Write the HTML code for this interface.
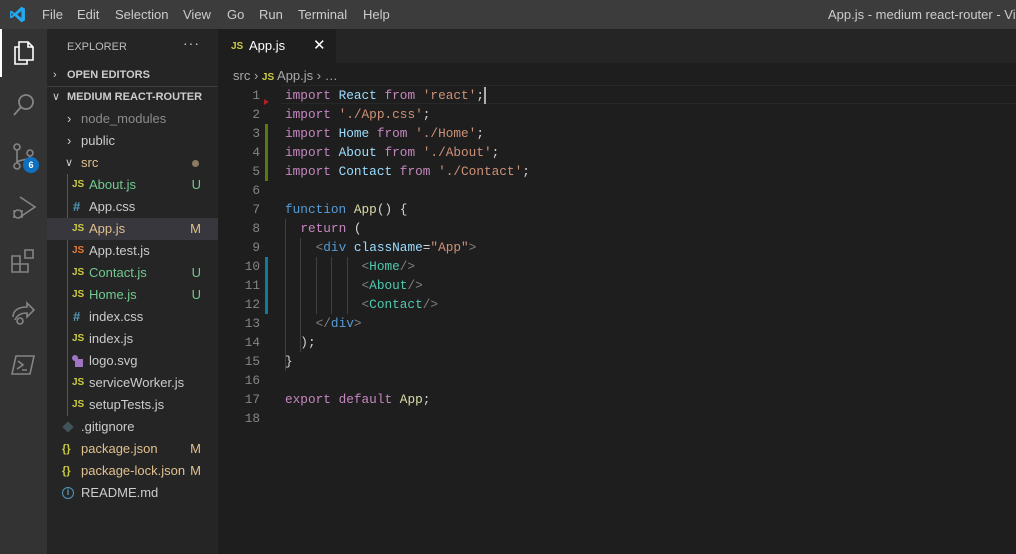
<!DOCTYPE html>
<html><head><style>
*{margin:0;padding:0;box-sizing:border-box}
body{width:1016px;height:554px;overflow:hidden;background:#1e1e1e;font-family:"Liberation Sans",sans-serif;font-size:13px;color:#ccc;position:relative}
.a{position:absolute}
#title{left:0;top:0;width:1016px;height:29px;background:#3c3c3c;overflow:hidden}
#title span{position:absolute;top:7px;font-size:13px;color:#ccc;white-space:nowrap}
#act{left:0;top:29px;width:47px;height:525px;background:#333}
#side{left:47px;top:29px;width:171px;height:525px;background:#252526}
#tabs{left:218px;top:29px;width:798px;height:34px;background:#252526}
.row{position:absolute;left:0;width:171px;height:22px;line-height:22px;font-size:13px;white-space:nowrap}
.row .i{position:absolute;font-size:10px;font-weight:bold}
.row .n{position:absolute}
.row .s{position:absolute;right:17px;font-size:13px}
.js{color:#cbcb41}
.code{position:absolute;left:285px;font-family:"Liberation Mono",monospace;font-size:12.75px;white-space:pre;line-height:19px;height:19px;color:#d4d4d4}
.ln{position:absolute;left:230px;width:30px;text-align:right;font-family:"Liberation Mono",monospace;font-size:12.75px;line-height:19px;color:#858585}
.k{color:#c586c0}.v{color:#9cdcfe}.s2{color:#ce9178}.b{color:#569cd6}.f{color:#dcdcaa}.t{color:#4ec9b0}.g{color:#808080}
.guide{position:absolute;width:1px;background:#404040}
</style></head><body>
<div id="title" class="a">
<svg class="a" style="left:9px;top:6px" width="17" height="17" viewBox="0 0 24 24"><path d="M17.5 1L8 10 3.5 6.5 1.5 7.5v9l2 1L8 14l9.5 9 5-2.5V3.5z M17.5 7v10l-6-5z M3.5 9.5 6 12l-2.5 2.5z" fill="#23a9f2" fill-rule="evenodd"/></svg>
<span style="left:42px">File</span><span style="left:77px">Edit</span><span style="left:115px">Selection</span><span style="left:183px">View</span><span style="left:227px">Go</span><span style="left:259px">Run</span><span style="left:298px">Terminal</span><span style="left:363px">Help</span>
<span style="left:828px">App.js - medium react-router - Visual Studio Code</span>
</div>
<div id="act" class="a">
<div class="a" style="left:0;top:0;width:2px;height:48px;background:#fff"></div>
<svg class="a" style="left:11px;top:11px" width="26" height="26" viewBox="0 0 26 26" fill="none" stroke="#fff" stroke-width="1.6"><path d="M8 2h9l5 5v13H8z M17 2v5h5"/><path d="M8 7H4v17h12v-4"/></svg>
<svg class="a" style="left:11px;top:63px" width="26" height="26" viewBox="0 0 26 26" fill="none" stroke="#858585" stroke-width="1.8"><circle cx="15" cy="10" r="7"/><path d="M10 15 3 23"/></svg>
<svg class="a" style="left:11px;top:114px" width="26" height="28" viewBox="0 0 26 28" fill="none" stroke="#858585" stroke-width="1.6"><circle cx="6" cy="4" r="3"/><circle cx="6" cy="23" r="3"/><circle cx="19" cy="10" r="3"/><path d="M6 7v13 M19 13c0 5-13 3-13 7"/></svg>
<div class="a" style="left:23px;top:128px;width:16px;height:16px;border-radius:8px;background:#0e70c0;color:#fff;font-size:9px;font-weight:bold;text-align:center;line-height:16px">6</div>
<svg class="a" style="left:10px;top:165px" width="28" height="28" viewBox="0 0 28 28" fill="none" stroke="#858585" stroke-width="1.6"><path d="M10 3l15 10-15 10"/><circle cx="8" cy="20" r="4"/><path d="M3 17h2M3 23h2M11 17h2M11 23h2"/></svg>
<svg class="a" style="left:10px;top:219px" width="26" height="26" viewBox="0 0 26 26" fill="none" stroke="#858585" stroke-width="1.6"><path d="M2 8h8v8H2zM2 16h8v8H2zM10 16h8v8h-8z M15 2h8v8h-8z"/></svg>
<svg class="a" style="left:10px;top:272px" width="28" height="26" viewBox="0 0 28 26" fill="none" stroke="#858585" stroke-width="1.6"><path d="M3 16c0-7 6-10 14-10V2l7 7-7 7v-4c-6 0-10 2-12 7"/><circle cx="10" cy="20" r="3"/></svg>
<svg class="a" style="left:11px;top:325px" width="24" height="22" viewBox="0 0 24 22" fill="none" stroke="#858585" stroke-width="1.6"><path d="M5 2h18l-4 18H1z M7 7l5 4-6 4 M11 16h5"/></svg>
</div>
<div id="side" class="a">
<div class="a" style="left:20px;top:12px;font-size:11px;color:#bbb">EXPLORER</div>
<div class="a" style="left:136px;top:6px;font-size:14px;color:#ccc;letter-spacing:1px">···</div>
<div class="row" style="top:35px"><span class="n" style="left:6px;font-size:11px">&#x203A;</span><span class="n" style="left:20px;font-size:11px;font-weight:bold">OPEN EDITORS</span></div>
<div class="a" style="left:0;top:57px;width:171px;height:1px;background:#3c3c3c"></div>
<div class="row" style="top:57px"><span class="n" style="left:5px;font-size:11px">&#x2228;</span><span class="n" style="left:20px;font-size:11px;font-weight:bold">MEDIUM REACT-ROUTER</span></div>
<div class="row" style="top:79px"><span class="n" style="left:20px">&#x203A;</span><span class="n" style="left:34px;color:#8c8c8c">node_modules</span></div>
<div class="row" style="top:101px"><span class="n" style="left:20px">&#x203A;</span><span class="n" style="left:34px">public</span></div>
<div class="row" style="top:123px"><span class="n" style="left:18px;font-size:11px">&#x2228;</span><span class="n" style="left:34px;color:#e2c08d">src</span><span class="a" style="left:145px;top:8px;width:7px;height:7px;border-radius:4px;background:#8a7b62"></span></div>
<div class="a" style="left:20px;top:145px;width:1px;height:242px;background:#585858"></div>
<div class="row" style="top:145px"><span class="i js" style="left:25px">JS</span><span class="n" style="left:42px;color:#73c991">About.js</span><span class="s" style="color:#73c991">U</span></div>
<div class="row" style="top:167px"><span class="i" style="left:26px;color:#519aba;font-size:13px">#</span><span class="n" style="left:42px">App.css</span></div>
<div class="row" style="top:189px;background:#37373d"><span class="i js" style="left:25px">JS</span><span class="n" style="left:42px;color:#e2c08d">App.js</span><span class="s" style="color:#e2c08d">M</span></div>
<div class="row" style="top:211px"><span class="i" style="left:25px;color:#e37933">JS</span><span class="n" style="left:42px">App.test.js</span></div>
<div class="row" style="top:233px"><span class="i js" style="left:25px">JS</span><span class="n" style="left:42px;color:#73c991">Contact.js</span><span class="s" style="color:#73c991">U</span></div>
<div class="row" style="top:255px"><span class="i js" style="left:25px">JS</span><span class="n" style="left:42px;color:#73c991">Home.js</span><span class="s" style="color:#73c991">U</span></div>
<div class="row" style="top:277px"><span class="i" style="left:26px;color:#519aba;font-size:13px">#</span><span class="n" style="left:42px">index.css</span></div>
<div class="row" style="top:299px"><span class="i js" style="left:25px">JS</span><span class="n" style="left:42px">index.js</span></div>
<div class="row" style="top:321px"><span class="a" style="left:25px;top:5px;width:6px;height:6px;border-radius:3px;background:#a074c4"></span><span class="a" style="left:28px;top:9px;width:8px;height:8px;background:#a074c4"></span><span class="n" style="left:42px">logo.svg</span></div>
<div class="row" style="top:343px"><span class="i js" style="left:25px">JS</span><span class="n" style="left:42px">serviceWorker.js</span></div>
<div class="row" style="top:365px"><span class="i js" style="left:25px">JS</span><span class="n" style="left:42px">setupTests.js</span></div>
<div class="row" style="top:387px"><span class="a" style="left:17px;top:7px;width:8px;height:8px;background:#41535b;transform:rotate(45deg)"></span><span class="n" style="left:34px">.gitignore</span></div>
<div class="row" style="top:409px"><span class="i js" style="left:15px;font-size:11px">{}</span><span class="n" style="left:34px;color:#e2c08d">package.json</span><span class="s" style="color:#e2c08d">M</span></div>
<div class="row" style="top:431px"><span class="i js" style="left:15px;font-size:11px">{}</span><span class="n" style="left:34px;color:#e2c08d">package-lock.json</span><span class="s" style="color:#e2c08d;right:17px">M</span></div>
<div class="row" style="top:453px"><span class="a" style="left:15px;top:5px;width:12px;height:12px;border:1.3px solid #519aba;border-radius:6px;color:#519aba;font-size:9px;line-height:9px;text-align:center;font-weight:bold">i</span><span class="n" style="left:34px">README.md</span></div>
</div>
<div id="tabs" class="a">
<div class="a" style="left:0;top:0;width:118px;height:34px;background:#1e1e1e">
<span class="a js" style="left:13px;top:12px;font-size:10px;font-weight:bold">JS</span>
<span class="a" style="left:31px;top:9px;color:#fff">App.js</span>
<span class="a" style="left:95px;top:7px;color:#fff;font-size:15px">✕</span>
</div></div>
<div class="a" style="left:233px;top:68px;font-size:13px;color:#a9a9a9;white-space:nowrap">src &#x203A; <span class="js" style="font-size:10px;font-weight:bold">JS</span> App.js &#x203A; …</div>
<div class="a" style="left:281px;top:85px;width:735px;height:19px;border-top:1px solid #282828;border-bottom:1px solid #282828"></div>
<div class="a" style="left:484px;top:87px;width:2px;height:17px;background:#aeafad"></div>
<div class="a" style="left:264px;top:99px;width:0;height:0;border-top:3px solid transparent;border-bottom:3px solid transparent;border-left:5px solid #b02020"></div>
<div class="a" style="left:265px;top:124px;width:3px;height:57px;background:#587c0c"></div>
<div class="a" style="left:265px;top:257px;width:3px;height:57px;background:#0c7d9d"></div>
<div class="guide" style="left:285px;top:219px;height:152px"></div>
<div class="guide" style="left:300px;top:238px;height:114px"></div>
<div class="guide" style="left:316px;top:257px;height:57px"></div>
<div class="guide" style="left:331px;top:257px;height:57px"></div>
<div class="guide" style="left:347px;top:257px;height:57px"></div>
<div class="ln" style="top:86px">1</div><div class="ln" style="top:105px">2</div><div class="ln" style="top:124px">3</div><div class="ln" style="top:143px">4</div><div class="ln" style="top:162px">5</div><div class="ln" style="top:181px">6</div><div class="ln" style="top:200px">7</div><div class="ln" style="top:219px">8</div><div class="ln" style="top:238px">9</div><div class="ln" style="top:257px">10</div><div class="ln" style="top:276px">11</div><div class="ln" style="top:295px">12</div><div class="ln" style="top:314px">13</div><div class="ln" style="top:333px">14</div><div class="ln" style="top:352px">15</div><div class="ln" style="top:371px">16</div><div class="ln" style="top:390px">17</div><div class="ln" style="top:409px">18</div>
<div class="code" style="top:86px"><span class="k">import</span> <span class="v">React</span> <span class="k">from</span> <span class="s2">'react'</span>;</div>
<div class="code" style="top:105px"><span class="k">import</span> <span class="s2">'./App.css'</span>;</div>
<div class="code" style="top:124px"><span class="k">import</span> <span class="v">Home</span> <span class="k">from</span> <span class="s2">'./Home'</span>;</div>
<div class="code" style="top:143px"><span class="k">import</span> <span class="v">About</span> <span class="k">from</span> <span class="s2">'./About'</span>;</div>
<div class="code" style="top:162px"><span class="k">import</span> <span class="v">Contact</span> <span class="k">from</span> <span class="s2">'./Contact'</span>;</div>
<div class="code" style="top:200px"><span class="b">function</span> <span class="f">App</span>() {</div>
<div class="code" style="top:219px">  <span class="k">return</span> (</div>
<div class="code" style="top:238px">    <span class="g">&lt;</span><span class="b">div</span> <span class="v">className</span>=<span class="s2">"App"</span><span class="g">&gt;</span></div>
<div class="code" style="top:257px">          <span class="g">&lt;</span><span class="t">Home</span><span class="g">/&gt;</span></div>
<div class="code" style="top:276px">          <span class="g">&lt;</span><span class="t">About</span><span class="g">/&gt;</span></div>
<div class="code" style="top:295px">          <span class="g">&lt;</span><span class="t">Contact</span><span class="g">/&gt;</span></div>
<div class="code" style="top:314px">    <span class="g">&lt;/</span><span class="b">div</span><span class="g">&gt;</span></div>
<div class="code" style="top:333px">  );</div>
<div class="code" style="top:352px">}</div>
<div class="code" style="top:390px"><span class="k">export</span> <span class="k">default</span> <span class="f">App</span>;</div>
</body></html>
